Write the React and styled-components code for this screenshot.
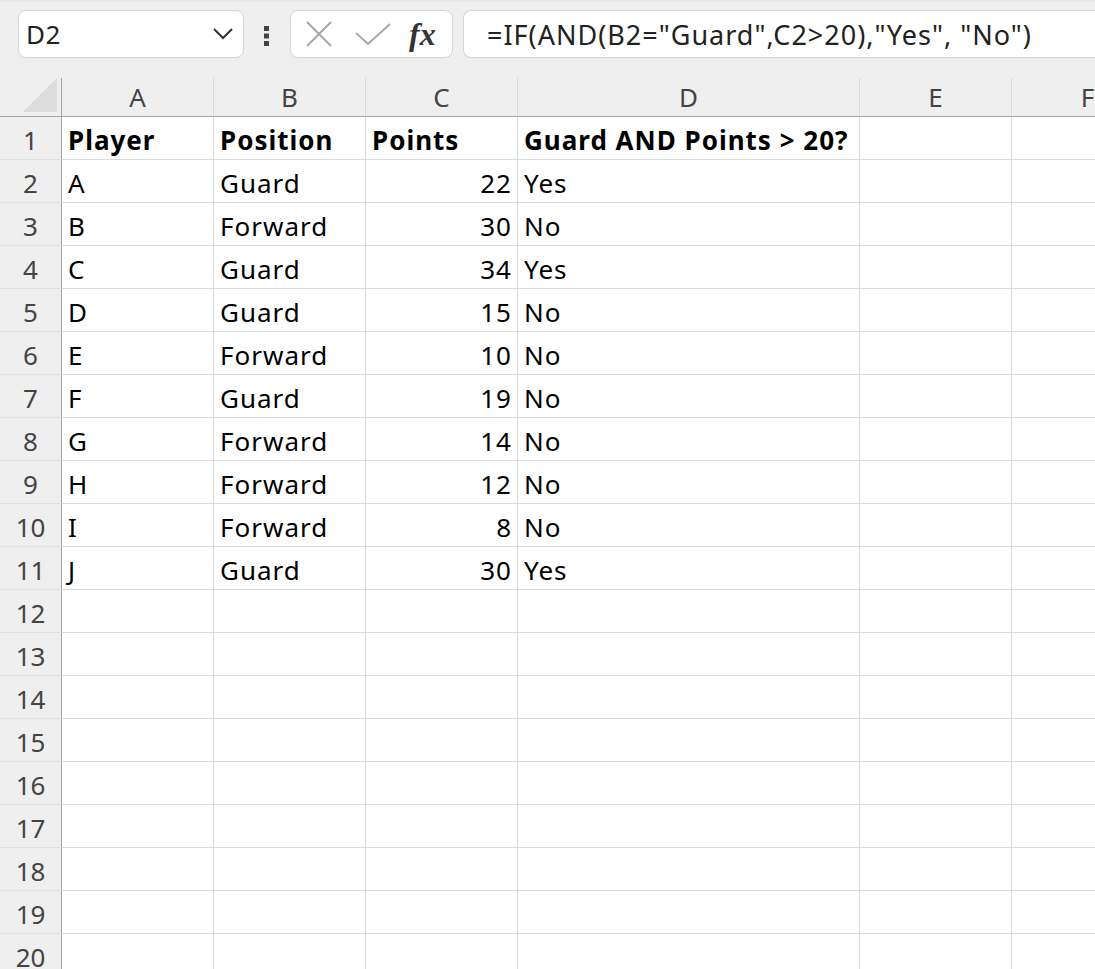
import styled, { createGlobalStyle } from "styled-components";

const GlobalStyles = createGlobalStyle`
  * {
    box-sizing: border-box;
    margin: 0;
    padding: 0;
  }
  html, body {
    height: 100%;
    overflow: hidden;
    background: #ffffff;
    font-family: "Noto Sans", "Open Sans", sans-serif;
  }
`;

const COLS = [
  { key: "A", width: 152 },
  { key: "B", width: 152 },
  { key: "C", width: 152 },
  { key: "D", width: 342 },
  { key: "E", width: 152 },
  { key: "F", width: 152 },
];

const DATA = [
  ["Player", "Position", "Points", "Guard AND Points > 20?"],
  ["A", "Guard", 22, "Yes"],
  ["B", "Forward", 30, "No"],
  ["C", "Guard", 34, "Yes"],
  ["D", "Guard", 15, "No"],
  ["E", "Forward", 10, "No"],
  ["F", "Guard", 19, "No"],
  ["G", "Forward", 14, "No"],
  ["H", "Forward", 12, "No"],
  ["I", "Forward", 8, "No"],
  ["J", "Guard", 30, "Yes"],
];

const ROW_COUNT = 20;

const Screen = styled.div`
  height: 100vh;
  overflow: hidden;
  display: flex;
  flex-direction: column;
  background: #f0f0f0;
`;

const Toolbar = styled.div`
  height: 78px;
  flex: none;
  display: flex;
  align-items: flex-start;
  padding: 10px 0 0 18px;
  background: #efefef;
  border-top: 2px solid #e8e8e8;
`;

const Box = styled.div`
  height: 48px;
  background: #ffffff;
  border: 1px solid #d6d6d6;
  border-radius: 8px;
  display: flex;
  align-items: center;
  margin-top: -2px;
`;

const NameBox = styled(Box)`
  width: 226px;
  padding: 0 10px 0 7px;
  justify-content: space-between;
  font-size: 26px;
  letter-spacing: 0.5px;
  color: #222;
`;

const MoreDots = styled.div`
  width: 46px;
  display: flex;
  justify-content: center;
  padding-top: 14px;
`;

const FormulaButtons = styled(Box)`
  width: 163px;
  padding: 0 10px 0 14px;
  gap: 22px;
`;

const FormulaInput = styled(Box)`
  flex: 1;
  margin-left: 10px;
  padding-left: 23px;
  border-right: none;
  border-radius: 8px 0 0 8px;
  font-size: 27px;
  letter-spacing: 1px;
  color: #222;
  white-space: nowrap;
`;

const Fx = styled.span`
  font-family: "Liberation Serif", "DejaVu Serif", serif;
  font-style: italic;
  font-weight: 700;
  font-size: 32px;
  color: #333;
  line-height: 1;
  margin-left: -4px;
`;

const Sheet = styled.div`
  flex: 1;
  display: grid;
  grid-template-columns: 62px ${COLS.map((c) => c.width + "px").join(" ")} 1fr;
  grid-template-rows: 39px;
  grid-auto-rows: 43px;
  background: #ffffff;
`;

const Corner = styled.div`
  background: #efefef;
  border-right: 1px solid #a6a6a6;
  border-bottom: 1px solid #a6a6a6;
  position: relative;
`;

const CornerTriangle = styled.div`
  position: absolute;
  right: 4px;
  bottom: 4px;
  width: 34px;
  height: 34px;
  background: #dcdcdc;
  clip-path: polygon(100% 0, 100% 100%, 0 100%);
`;

const ColHeader = styled.div`
  background: #efefef;
  border-right: 1px solid #dadada;
  border-bottom: 1px solid #a6a6a6;
  display: flex;
  align-items: center;
  justify-content: center;
  font-size: 26px;
  color: #444;
`;

const RowHeader = styled.div`
  background: #efefef;
  border-right: 1px solid #a6a6a6;
  border-bottom: 1px solid #e2e2e2;
  display: flex;
  align-items: center;
  justify-content: center;
  font-size: 26px;
  color: #444;
  padding-top: 3px;
`;

const Cell = styled.div`
  border-right: 1px solid #dadada;
  border-bottom: 1px solid #dadada;
  display: flex;
  align-items: center;
  justify-content: ${(p) => (p.$num ? "flex-end" : "flex-start")};
  padding: 3px 5px 0 6px;
  font-size: 26px;
  letter-spacing: 1px;
  font-weight: ${(p) => (p.$bold ? 700 : 400)};
  color: #000;
  white-space: nowrap;
  overflow: hidden;
`;

const XIcon = () => (
  <svg width="28" height="28" viewBox="0 0 28 28">
    <path d="M2 2 L26 26 M26 2 L2 26" stroke="#a8a8a8" strokeWidth="2" fill="none" />
  </svg>
);

const CheckIcon = () => (
  <svg width="36" height="24" viewBox="0 0 36 24">
    <path d="M1 11 L13 22 L35 2" stroke="#a8a8a8" strokeWidth="2" fill="none" />
  </svg>
);

const Chevron = () => (
  <svg width="20" height="12" viewBox="0 0 20 12">
    <path d="M1 1 L10 10 L19 1" stroke="#333" strokeWidth="2" fill="none" />
  </svg>
);

const Dots = () => (
  <svg width="6" height="20" viewBox="0 0 6 20">
    <rect x="0" y="0" width="5" height="5" fill="#444" />
    <rect x="0" y="7.5" width="5" height="5" fill="#444" />
    <rect x="0" y="15" width="5" height="5" fill="#444" />
  </svg>
);

const App = () => {
  const rows = Array.from({ length: ROW_COUNT }, (_, i) => DATA[i] || []);

  return (
    <>
      <GlobalStyles />
      <Screen>
        <Toolbar>
          <NameBox>
            <span>D2</span>
            <Chevron />
          </NameBox>
          <MoreDots>
            <Dots />
          </MoreDots>
          <FormulaButtons>
            <XIcon />
            <CheckIcon />
            <Fx>fx</Fx>
          </FormulaButtons>
          <FormulaInput>=IF(AND(B2="Guard",C2&gt;20),"Yes", "No")</FormulaInput>
        </Toolbar>

        <Sheet>
          <Corner>
            <CornerTriangle />
          </Corner>
          {COLS.map((c) => (
            <ColHeader key={c.key}>{c.key}</ColHeader>
          ))}
          <ColHeader />

          {rows.map((row, r) => (
            <>
              <RowHeader key={`h${r}`}>{r + 1}</RowHeader>
              {COLS.map((c, ci) => {
                const v = row[ci];
                return (
                  <Cell
                    key={`${r}-${c.key}`}
                    $bold={r === 0}
                    $num={typeof v === "number"}
                  >
                    {v}
                  </Cell>
                );
              })}
              <Cell key={`${r}-rest`} />
            </>
          ))}
        </Sheet>
      </Screen>
    </>
  );
};

export default App;
